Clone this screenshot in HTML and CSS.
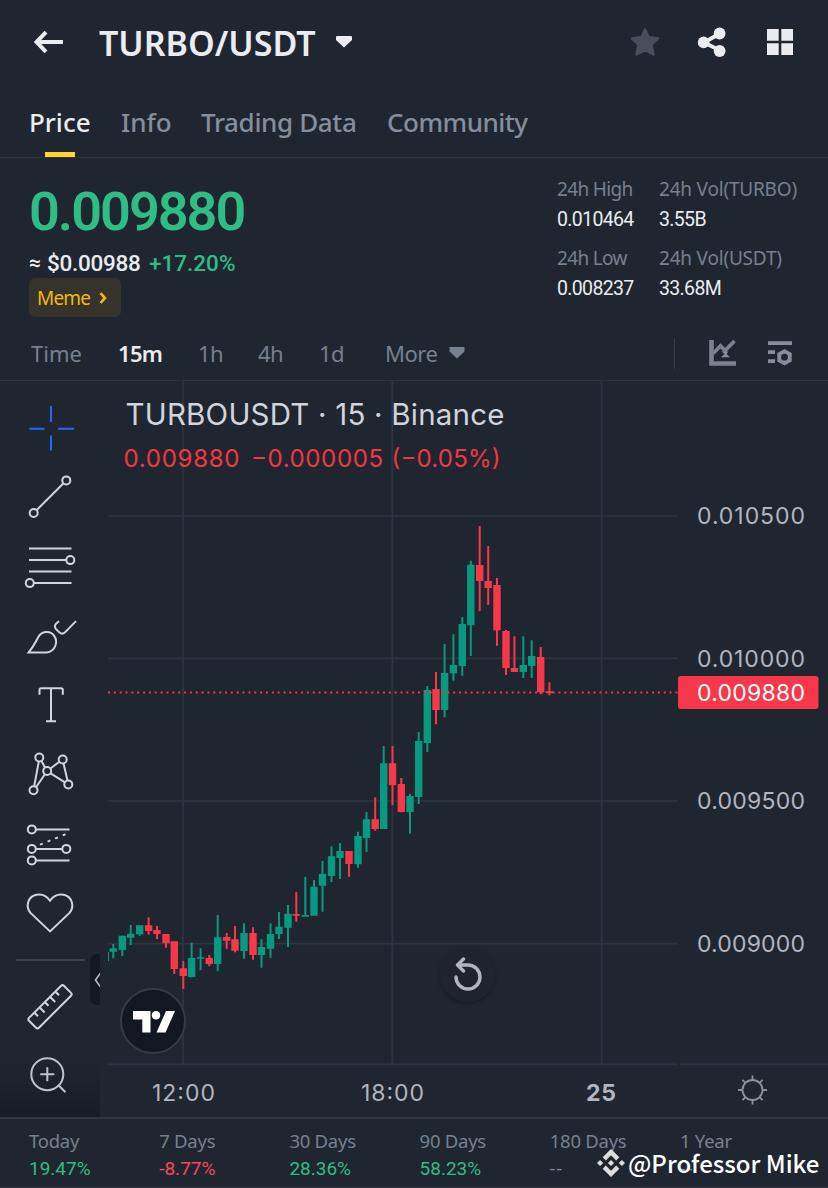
FILE: index.html
```html
<!DOCTYPE html>
<html lang="en">
<head>
<meta charset="utf-8">
<title>TURBO/USDT</title>
<link rel="stylesheet" href="styles.css">
</head>
<body>
<div class="app">
  <header class="header">
    <svg class="back" width="30" height="24" viewBox="0 0 30 24"><path d="M29 12H3M12 2.200L2.500 12l9.500 9.800" fill="none" stroke="currentColor" stroke-width="4"/></svg>
    <h1 class="pair">TURBO/USDT</h1>
    <svg class="caret" width="16" height="12" viewBox="0 0 16 12"><path d="M1 0H15Q16 0 16 1V4L8 11.500L0 4V1Q0 0 1 0Z" fill="currentColor"/></svg>
    <div class="actions">
      <svg class="star" width="30" height="30" viewBox="0 0 30 30"><path d="M15 2.500L18.600 10.300L28 11.500L21.500 17.700L23.500 27.500L15 23.200L6.500 27.500L8.500 17.700L2 11.500L11.400 10.300Z" fill="#474f5b" stroke="#474f5b" stroke-width="2.500" stroke-linejoin="round"/></svg>
      <svg class="share" width="30" height="30" viewBox="0 0 30 30"><path d="M23 6.500L7 15.500L23 23.500" fill="none" stroke="#eaecef" stroke-width="3.800"/><g fill="#eaecef"><circle cx="22.600" cy="6.500" r="5.900"/><circle cx="6.600" cy="15.400" r="5.800"/><circle cx="22.600" cy="24" r="5.900"/></g></svg>
      <svg width="26" height="26" viewBox="0 0 26 26"><path d="M0 0h11.700v11.700H0zM14.300 0h11.700v11.700H14.300zM0 14.300h11.700V26H0zM14.300 14.300h11.700V26H14.300z" fill="#eaecef"/></svg>
    </div>
  </header>

  <nav class="tabs">
    <a class="tab tab-active">Price</a>
    <a class="tab tab-info">Info</a>
    <a class="tab tab-trading">Trading Data</a>
    <a class="tab tab-community">Community</a>
  </nav>

  <section class="summary">
    <div class="quote">
      <div class="last">0.009880</div>
      <div class="fiat"><span class="approx">≈</span><span class="usd">$0.00988</span><span class="change">+17.20%</span></div>
      <div class="tag">Meme<svg width="8" height="12" viewBox="0 0 8 12"><path d="M1.500 1.200L6 6L1.500 10.800" fill="none" stroke="currentColor" stroke-width="2.600"/></svg></div>
    </div>
    <dl class="day">
      <div><dt class="l-high">24h High</dt><dd>0.010464</dd></div>
      <div><dt>24h Vol(TURBO)</dt><dd>3.55B</dd></div>
      <div><dt class="l-low">24h Low</dt><dd>0.008237</dd></div>
      <div><dt>24h Vol(USDT)</dt><dd>33.68M</dd></div>
    </dl>
  </section>

  <nav class="frames">
    <span class="frame f-time">Time</span>
    <span class="frame f-15 frame-active">15m</span>
    <span class="frame f-1h">1h</span>
    <span class="frame f-4h">4h</span>
    <span class="frame f-1d">1d</span>
    <span class="frame f-more">More<svg width="16" height="12" viewBox="0 0 16 12"><path d="M.5 0H15.500V4.500L8 11.500L.5 4.500Z" fill="currentColor"/></svg></span>
    <div class="frame-tools">
      <svg width="28" height="28" viewBox="0 0 28 28"><path d="M3.500 1V24.500H28" fill="none" stroke="#7a8290" stroke-width="4.600"/><path d="M5 14.500L12.500 7L17 11.500L26.500 2" fill="none" stroke="#7a8290" stroke-width="3.800"/><path d="M13.500 12.500H20.500L18.500 15L22 18.300H13L16.500 15Z" fill="currentColor"/></svg>
      <svg width="24" height="25" viewBox="0 0 24 25"><path d="M0 2.200H24M0 11.200H7M0 20.200H7" stroke="currentColor" stroke-width="3.800"/><path fill-rule="evenodd" d="M16.500 8L23.700 12V20.500L16.500 24.500L9.300 20.500V12ZM16.500 12.800a3.400 3.400 0 1 0 0 6.800a3.400 3.400 0 1 0 0-6.800Z" fill="currentColor"/></svg>
    </div>
  </nav>

  <main class="workspace">
    <aside class="tools">
      <svg class="tool tool-on" viewBox="0 394 100 69.300"><path d="M51 406v16M51 435.500v15M29.500 428.700H44.500M58 428.700H74"/></svg>
      <svg class="tool" viewBox="0 463.300 100 69.300"><path d="M36.500 510.500L63.500 483.500"/><circle cx="33.700" cy="513.300" r="4"/><circle cx="66.300" cy="480.700" r="4"/></svg>
      <svg class="tool" viewBox="0 532.600 100 69.300"><path d="M29 548H71.500M29 559.700H66M29 571.200H71.500M34 582.700H71.500"/><circle cx="70.300" cy="559.700" r="4"/><circle cx="29.800" cy="582.700" r="4"/></svg>
      <svg class="tool" viewBox="0 601.900 100 69.300"><path d="M28.500 652.500C35 644.500 36 641 38.300 637C41.500 631 50 630 54 635.500C58.500 641.500 55.500 651 47 652.300Q45 652.500 28.500 652.500ZM59 621.200L56.500 623.200C54.500 625 54.500 627 56 629L59.500 632.400C61.500 634 64 633.500 65.500 631.800L76 621"/></svg>
      <svg class="tool" viewBox="0 671.200 100 69.300"><path d="M39.500 695V690Q39.500 688.500 41 688.500H61Q62.800 688.500 62.800 690V695M51 688.500V721.500M46 721.500H56"/></svg>
      <svg class="tool" viewBox="0 740.500 100 69.300"><path d="M38.800 762L34.200 786.700M41.500 761.500L45 768M50.500 769L59 762.500M63.500 763.800L67.500 781M50.600 773.800L65 782.800M44.700 775L36.200 787.500"/><circle cx="39.300" cy="758" r="4"/><circle cx="62.700" cy="760" r="4"/><circle cx="47.200" cy="771.500" r="4"/><circle cx="33.500" cy="790.700" r="4"/><circle cx="68.300" cy="785" r="4"/></svg>
      <svg class="tool" viewBox="0 809.800 100 69.300"><path d="M36 829.200H69.500M36 848.700H62M36 860.200H69.500"/><path d="M40 844.500L68 833" stroke-dasharray="3 5.200"/><circle cx="31.800" cy="829.200" r="4"/><circle cx="31.800" cy="848.700" r="4"/><circle cx="66.300" cy="848.700" r="4"/><circle cx="31.800" cy="860.200" r="4"/></svg>
      <svg class="tool" viewBox="0 879.100 100 69.300"><path d="M50 931.500L30.500 913C25 906.500 28 896.500 36.500 894.900C42.500 893.800 47 896.500 50 900.800C53 896.500 57.500 893.800 63.500 894.900C72 896.500 75 906.500 69.500 913Z"/></svg>
      <hr class="rule">
      <svg class="tool" viewBox="0 972.500 100 69.300"><g transform="rotate(-45 50 1007.300)"><rect x="25.300" y="1000.300" width="49.400" height="14" rx="2"/><path d="M34.800 1000.500v5M42.200 1000.500v7M49.700 1000.500v5M57.100 1000.500v7M64.500 1000.500v5"/></g></svg>
      <svg class="tool tool-zoom" viewBox="0 1041.800 100 69.300"><circle cx="47.300" cy="1074" r="16"/><path d="M47.300 1067V1081M40.300 1074H54.300M58.500 1085L65.500 1092"/></svg>
      <div class="collapse"><svg width="7" height="16" viewBox="0 0 7 16"><path d="M6.500 1L1.500 8L6.500 15" fill="none" stroke="#b8bcc6" stroke-width="1.600"/></svg></div>
    </aside>

    <div class="chart">
      <svg class="plot" width="728" height="736" viewBox="100 381 728 736">
        <path class="grid" d="M183 381V1064M392.300 381V1064M601.500 381V1064M108 516H678M108 658.300H678M108 801H678M108 943.700H678M108 1064.300H677M680 1064.300H828"/>
        <g id="candles"></g>
        <path class="last-line" d="M108 692.500H678"/>
        <text class="symbol" x="125.500" y="425" textLength="379">TURBOUSDT · 15 · Binance</text>
        <text class="delta" x="123.500" y="466.500" textLength="116">0.009880</text>
        <text class="delta" x="251" y="466.500" textLength="132">−0.000005</text>
        <text class="delta" x="391.500" y="466.500" textLength="109">(−0.05%)</text>
        <g class="scale">
          <text x="697" y="524" textLength="108">0.010500</text>
          <text x="697" y="666.500" textLength="108">0.010000</text>
          <text x="697" y="809.300" textLength="108">0.009500</text>
          <text x="697" y="952" textLength="108">0.009000</text>
        </g>
        <rect x="678" y="676" width="140.500" height="33" rx="3" fill="#f7384a"/>
        <text class="price-tag" x="697" y="701" textLength="108">0.009880</text>
        <g class="scale">
          <text x="152" y="1100.500" textLength="63">12:00</text>
          <text x="361" y="1100.500" textLength="63">18:00</text>
          <text class="date" x="586" y="1100.500" textLength="30">25</text>
        </g>
        <g class="gear"><circle cx="752.500" cy="1090" r="10"/><path d="M752.500 1080v-4.500M752.500 1100v4.500M742.500 1090h-4.500M762.500 1090h4.500M745.400 1082.900l-3-3M759.600 1082.900l3-3M745.400 1097.100l-3 3M759.600 1097.100l3 3"/></g>
      </svg>
      <div class="brand"><svg width="42" height="22" viewBox="0 0 42 22"><path d="M0 0H17.500V21.500H9.300V8.500H0ZM33 0H42L32.500 21.500H23.500Z" fill="#fff"/><circle cx="23" cy="4.300" r="4.200" fill="#fff"/></svg></div>
      <div class="reset"><svg width="30" height="36" viewBox="0 0 30 36"><path d="M3 20a12 12 0 1 0 12-12H5M10.500 2L4.500 8L10.500 14" fill="none" stroke="#b2b5be" stroke-width="3.400" stroke-linecap="round" stroke-linejoin="round"/></svg></div>
    </div>
  </main>

  <footer class="returns">
    <div class="ret"><span class="ret-label">Today</span><span class="up">19.47%</span></div>
    <div class="ret"><span class="ret-label">7 Days</span><span class="down">-8.77%</span></div>
    <div class="ret"><span class="ret-label">30 Days</span><span class="up">28.36%</span></div>
    <div class="ret"><span class="ret-label">90 Days</span><span class="up">58.23%</span></div>
    <div class="ret"><span class="ret-label">180 Days</span><span class="flat">--</span></div>
    <div class="ret"><span class="ret-label">1 Year</span><span class="flat">--</span></div>
  </footer>

  <div class="watermark">
    <svg width="28" height="28" viewBox="0 0 28 28"><path d="M14 0L22.300 8.300L19.200 11.400L14 6.200L8.800 11.400L5.700 8.300ZM14 28L22.300 19.700L19.200 16.600L14 21.800L8.800 16.600L5.700 19.700ZM0 14L3.100 10.900L6.200 14L3.100 17.100ZM21.800 14L24.900 10.900L28 14L24.900 17.100ZM14 10.900L17.100 14L14 17.100L10.900 14Z" fill="#dedede"/></svg>
    <span>@Professor Mike</span>
  </div>
</div>
<script src="chart.js"></script>
</body>
</html>
```

FILE: styles.css
```css
* { box-sizing: border-box; }

body {
  margin: 0;
  background: #202630;
  color: #eaecef;
  font-family: "Noto Sans", "Open Sans", sans-serif;
}

svg { display: block; flex: none; }

.app {
  position: relative;
  width: 828px;
  height: 1188px;
  overflow: hidden;
  display: flex;
  flex-direction: column;
}

.header {
  height: 88px;
  padding: 0 35px 4px 34px;
  display: flex;
  align-items: center;
}
.pair {
  margin: 2px 0 0 35px;
  width: 218px;
  font-size: 34px;
  font-weight: 600;
  line-height: 40px;
  white-space: nowrap;
}
.caret { margin-left: 19px; }
.actions {
  margin-left: auto;
  display: flex;
  align-items: center;
}
.star { margin-right: 37px; }
.share { margin-right: 40px; }

.tabs {
  height: 70px;
  padding-left: 29px;
  display: flex;
  gap: 30px;
  border-bottom: 1px solid #2d343f;
}
.tab {
  position: relative;
  height: 70px;
  line-height: 69px;
  font-size: 26px;
  font-weight: 500;
  color: #848e9c;
  white-space: nowrap;
}
.tab-active { width: 62px; color: #eaecef; }
.tab-active::after {
  content: "";
  position: absolute;
  left: 16px;
  bottom: 1px;
  width: 30px;
  height: 5px;
  background: #fcd535;
}
.tab-info { width: 50px; }
.tab-trading { width: 156px; letter-spacing: -.35px; }
.tab-community { letter-spacing: -.5px; }

.summary {
  height: 168px;
  display: flex;
  justify-content: space-between;
  padding: 18px 29px 0;
}
.last {
  padding-top: 2px;
  height: 69px;
  font: 600 54px/68px Roboto, sans-serif;
  letter-spacing: -2px;
  color: #2ebd85;
}
.fiat {
  display: flex;
  height: 33px;
  font: 500 22.500px/36px Roboto, sans-serif;
}
.approx { width: 18px; font-size: 21px; }
.usd { width: 102px; letter-spacing: -.3px; }
.change { color: #2ebd85; }
.tag {
  width: 92px;
  height: 39px;
  padding: 0 8px;
  display: flex;
  align-items: center;
  gap: 9px;
  border-radius: 6px;
  background: #35332b;
  color: #f0b90b;
  font-size: 19px;
  letter-spacing: -.8px;
}
.day {
  margin: 0;
  width: 242px;
  display: grid;
  grid-template-columns: 102px 140px;
  grid-auto-rows: 69.300px;
}
.day dt {
  font-size: 19px;
  line-height: 26px;
  letter-spacing: -.2px;
  color: #76808f;
  white-space: nowrap;
}
.day .l-high, .day .l-low { letter-spacing: -.65px; }
.day dd {
  margin: 5px 0 0;
  font: 400 19.500px/26px Roboto, sans-serif;
  letter-spacing: -.65px;
}

.frames {
  height: 55px;
  padding-left: 31px;
  display: flex;
  align-items: center;
  border-bottom: 1px solid #2d343f;
  font-size: 22px;
  color: #76808f;
}
.frame { white-space: nowrap; }
.frame-active { color: #eaecef; font-weight: 600; letter-spacing: -.7px; }
.f-time { width: 87px; }
.f-15 { width: 80px; }
.f-1h { width: 60px; letter-spacing: -.5px; }
.f-4h { width: 61px; letter-spacing: -.5px; }
.f-1d { width: 66px; letter-spacing: -.5px; }
.f-more { display: flex; align-items: center; gap: 12px; letter-spacing: -.5px; }
.frame-tools {
  margin-left: auto;
  height: 31px;
  width: 154px;
  padding-left: 33px;
  display: flex;
  align-items: center;
  gap: 32px;
  border-left: 1px solid #333b47;
  color: #848e9c;
}

.workspace {
  height: 738px;
  display: grid;
  grid-template-columns: 100px 728px;
  border-bottom: 2px solid #2f3641;
}
.tools {
  position: relative;
  height: 736px;
  padding-top: 13px;
  display: flex;
  flex-direction: column;
  overflow: hidden;
  background: linear-gradient(#202630 675px, #171b26 736px);
}
.tool {
  width: 100px;
  height: 69.300px;
  fill: none;
  stroke: #d1d4dc;
  stroke-width: 2;
}
.tool-on { stroke: #2962ff; }
.tool-zoom { stroke: #bfc2ca; }
.rule {
  width: 69px;
  height: 2px;
  margin: 11px 0 11.100px 15.500px;
  border: 0;
  flex: none;
  background: #3b414d;
}
.collapse {
  position: absolute;
  left: 90px;
  top: 573px;
  width: 18px;
  height: 51px;
  padding-left: 4px;
  display: flex;
  align-items: center;
  border-radius: 7px;
  background: #141822;
}
.chart { position: relative; height: 736px; overflow: hidden; }
.plot { font-family: Inter, Roboto, sans-serif; }
.grid { fill: none; stroke: #2e3440; stroke-width: 1.700; }
.last-line { stroke: #f23645; stroke-width: 2; stroke-dasharray: 2 3.850; }
.up-candle { fill: #089981; }
.down-candle { fill: #f7384a; }
.symbol { font-size: 29.500px; fill: #d1d4dc; }
.delta { font-size: 24px; fill: #f23645; }
.scale { font-size: 23px; fill: #b2b5be; }
.date { font-weight: 700; }
.price-tag { font-size: 23px; fill: #fff; }
.gear { fill: none; stroke: #8d919b; stroke-width: 1.800; }
.brand {
  position: absolute;
  left: 20px;
  top: 607px;
  width: 66px;
  height: 66px;
  padding: 1px 0 0 1px;
  border: 2px solid #363a45;
  border-radius: 50%;
  background: #131722;
  display: flex;
  align-items: center;
  justify-content: center;
}
.reset {
  position: absolute;
  left: 340px;
  top: 566px;
  width: 55px;
  height: 55px;
  border-radius: 50%;
  background: #1f232d;
  box-shadow: 0 2px 5px rgba(0, 0, 0, .3);
  display: flex;
  align-items: center;
  justify-content: center;
}

.returns {
  height: 69px;
  padding: 8px 0 0 29px;
  display: grid;
  grid-template-columns: repeat(6, 130.200px);
  border-bottom: 1px solid #303741;
}
.ret { display: flex; flex-direction: column; font: 400 19px/27px Roboto, sans-serif; }
.ret-label { font: 400 18.500px/28px "Noto Sans", sans-serif; letter-spacing: -.25px; color: #76808f; }
.up { color: #2ebd85; }
.down { color: #f6465d; }
.flat { color: #848e9c; letter-spacing: 1.500px; }

.watermark {
  position: absolute;
  left: 597px;
  top: 1145px;
  display: flex;
  align-items: center;
  gap: 3px;
  font: 500 24px/36px "Noto Sans CJK SC", "Noto Sans", sans-serif;
  color: #fff;
  white-space: nowrap;
}
```

FILE: chart.js
```js
// Each row: centre x, wick top, wick bottom, body top, body bottom, rising.
const candles = [
  [113.3, 944, 958.3, 948.3, 951.7, 1], [122.3, 935.5, 956, 935.7, 950, 1],
  [130.7, 925, 945, 933.7, 937.7, 1], [139.7, 925.3, 935.7, 925.3, 934.3, 1],
  [148.6, 917.3, 934.7, 925.3, 931, 0], [157, 926, 939, 930, 934, 0],
  [166, 934, 947.7, 934, 943.3, 0], [174.3, 941.3, 974, 941.3, 969, 0],
  [183.3, 961, 989, 968.3, 976, 0], [191.6, 942.7, 977.5, 958, 977, 1],
  [200.6, 948.3, 970.3, 957.3, 958.7, 1], [209.3, 955, 966.3, 958, 964, 0],
  [217.7, 915, 971, 937.3, 964, 1], [226.7, 933, 949, 937, 940.7, 0],
  [235, 926, 952.3, 939.3, 950.7, 0], [244, 923.3, 958.7, 933, 951, 1],
  [253, 927.3, 959.7, 933, 955, 0], [261.5, 939.3, 967.7, 947, 955, 1],
  [270.5, 923.3, 957.7, 934, 948.7, 1], [279, 912, 939, 926.7, 934, 1],
  [288, 905, 947, 913.7, 927.7, 1], [296.3, 892, 921.7, 914, 915.7, 0],
  [305.3, 877, 916.5, 915, 916.7, 1], [314, 880, 915.7, 886.7, 915.7, 1],
  [322.5, 861, 911.7, 874, 885.7, 1], [331.5, 846.3, 882, 856.3, 876, 1],
  [340, 843, 879, 851, 858, 1], [349, 851, 876.7, 851, 864, 0],
  [358, 831.7, 867.7, 836, 864.3, 1], [366.5, 812, 852, 819.3, 838, 1],
  [375.2, 797.3, 830.7, 819.3, 829, 0], [383.7, 746, 829, 763.3, 829, 1],
  [392.5, 746, 805.3, 763.3, 785.3, 0], [401.3, 778, 812.3, 784, 812, 0],
  [410, 793.7, 833.7, 796, 812, 1], [418.7, 732, 804, 741, 797, 1],
  [427.3, 686, 752, 690, 743, 1], [436, 672, 724.3, 689, 710, 0],
  [444.6, 644, 717.3, 673, 710, 1], [453.4, 634.3, 680.7, 665, 673.3, 1],
  [462.3, 617, 675.7, 624, 666, 1], [470.8, 560.7, 656, 564.7, 625.3, 1],
  [479.7, 526, 611, 565, 581, 0], [488.2, 546, 605, 581, 588, 0],
  [497, 578, 645.7, 585, 630.3, 0], [506, 630, 675, 631, 668, 0],
  [514.4, 636.3, 672, 668, 672, 0], [523.3, 636.3, 678, 665, 672, 1],
  [531.7, 640.3, 678, 656, 666, 1], [540.7, 647, 694, 657, 692.3, 0],
  [549.4, 682.3, 695.3, 691.3, 693, 0]
];

const bar = (x, y, w, h) => `M${x} ${y}h${w}v${h}h${-w}z`;
const paths = ['', 'M108 952h1v9h-1z'];
for (const [x, high, low, top, bottom, rising] of candles) {
  paths[rising] += bar(x - 1, high, 2, low - high) + bar(x - 3.7, top, 7.4, bottom - top);
}
document.getElementById('candles').innerHTML =
  `<path class="down-candle" d="${paths[0]}"/><path class="up-candle" d="${paths[1]}"/>`;
```
